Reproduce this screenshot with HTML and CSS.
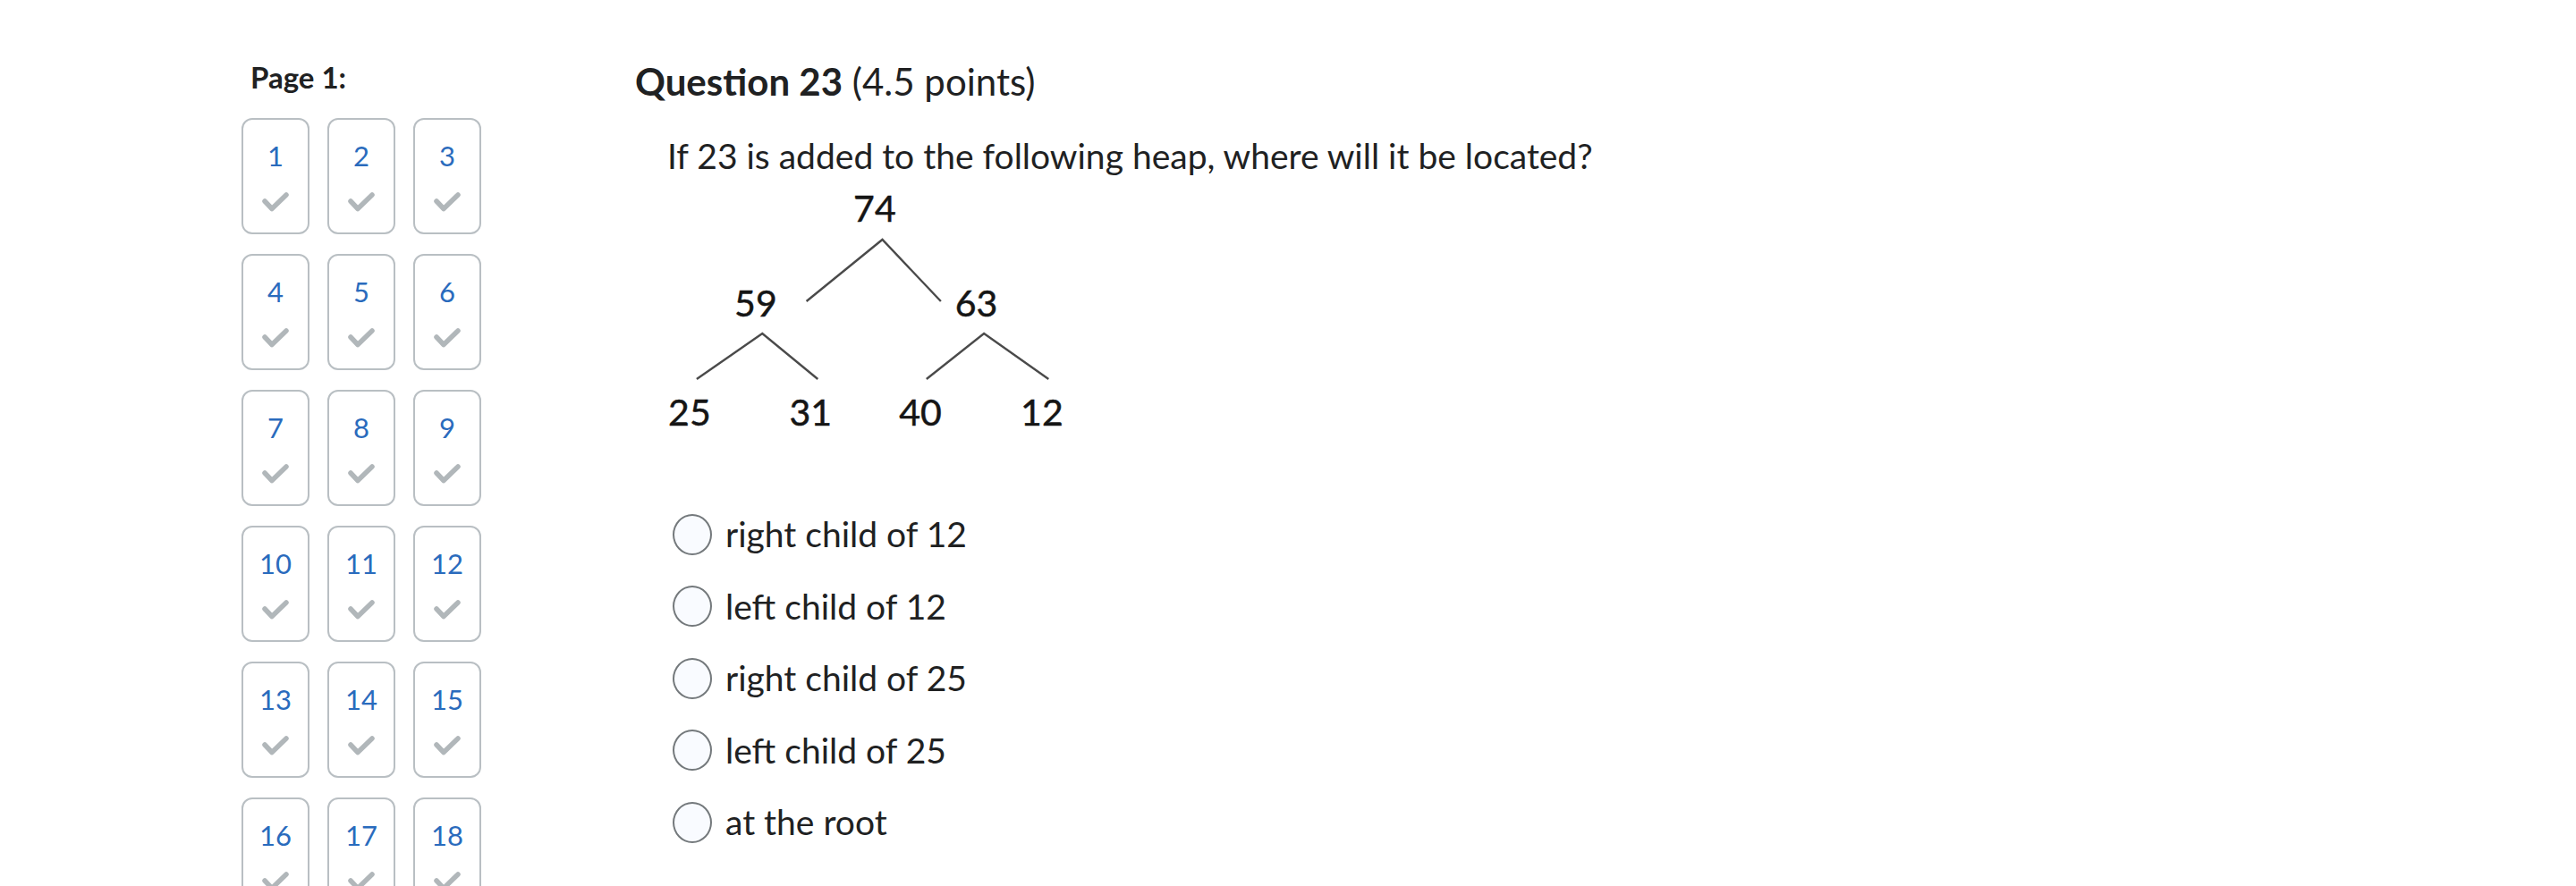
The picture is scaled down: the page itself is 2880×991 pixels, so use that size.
FILE: index.html
```html
<!DOCTYPE html>
<html lang="en">
<head>
<meta charset="utf-8">
<title>Question 23</title>
<link rel="stylesheet" href="styles.css">
</head>
<body>
<div class="page">
  <aside class="nav">
    <h2 class="nav-title">Page 1:</h2>
    <div class="tiles">
      <a class="tile"><span class="num">1</span><svg class="chk" viewBox="0 0 30 22"><path d="M3 10 L11 18.5 L27 3"/></svg></a>
      <a class="tile"><span class="num">2</span><svg class="chk" viewBox="0 0 30 22"><path d="M3 10 L11 18.5 L27 3"/></svg></a>
      <a class="tile"><span class="num">3</span><svg class="chk" viewBox="0 0 30 22"><path d="M3 10 L11 18.5 L27 3"/></svg></a>
      <a class="tile"><span class="num">4</span><svg class="chk" viewBox="0 0 30 22"><path d="M3 10 L11 18.5 L27 3"/></svg></a>
      <a class="tile"><span class="num">5</span><svg class="chk" viewBox="0 0 30 22"><path d="M3 10 L11 18.5 L27 3"/></svg></a>
      <a class="tile"><span class="num">6</span><svg class="chk" viewBox="0 0 30 22"><path d="M3 10 L11 18.5 L27 3"/></svg></a>
      <a class="tile"><span class="num">7</span><svg class="chk" viewBox="0 0 30 22"><path d="M3 10 L11 18.5 L27 3"/></svg></a>
      <a class="tile"><span class="num">8</span><svg class="chk" viewBox="0 0 30 22"><path d="M3 10 L11 18.5 L27 3"/></svg></a>
      <a class="tile"><span class="num">9</span><svg class="chk" viewBox="0 0 30 22"><path d="M3 10 L11 18.5 L27 3"/></svg></a>
      <a class="tile"><span class="num">10</span><svg class="chk" viewBox="0 0 30 22"><path d="M3 10 L11 18.5 L27 3"/></svg></a>
      <a class="tile"><span class="num">11</span><svg class="chk" viewBox="0 0 30 22"><path d="M3 10 L11 18.5 L27 3"/></svg></a>
      <a class="tile"><span class="num">12</span><svg class="chk" viewBox="0 0 30 22"><path d="M3 10 L11 18.5 L27 3"/></svg></a>
      <a class="tile"><span class="num">13</span><svg class="chk" viewBox="0 0 30 22"><path d="M3 10 L11 18.5 L27 3"/></svg></a>
      <a class="tile"><span class="num">14</span><svg class="chk" viewBox="0 0 30 22"><path d="M3 10 L11 18.5 L27 3"/></svg></a>
      <a class="tile"><span class="num">15</span><svg class="chk" viewBox="0 0 30 22"><path d="M3 10 L11 18.5 L27 3"/></svg></a>
      <a class="tile"><span class="num">16</span><svg class="chk" viewBox="0 0 30 22"><path d="M3 10 L11 18.5 L27 3"/></svg></a>
      <a class="tile"><span class="num">17</span><svg class="chk" viewBox="0 0 30 22"><path d="M3 10 L11 18.5 L27 3"/></svg></a>
      <a class="tile"><span class="num">18</span><svg class="chk" viewBox="0 0 30 22"><path d="M3 10 L11 18.5 L27 3"/></svg></a>
    </div>
  </aside>
  <main class="question">
    <h1 class="q-title"><strong>Question 23</strong> (4.5 points)</h1>
    <p class="q-text">If 23 is added to the following heap, where will it be located?</p>
    <svg class="heap" width="470" height="270" viewBox="0 0 470 270">
      <g class="edges">
        <path d="M161.6 122 L246.5 53 L311.9 122"/>
        <path d="M38.9 209 L112.3 158 L174.3 209"/>
        <path d="M295.8 209 L360.1 158 L432.3 209"/>
      </g>
      <g class="keys">
        <text x="237.9" y="33">74</text>
        <text x="104.9" y="139">59</text>
        <text x="351.5" y="139">63</text>
        <text x="30.9" y="261">25</text>
        <text x="166.2" y="261">31</text>
        <text x="289" y="261">40</text>
        <text x="424.9" y="261">12</text>
      </g>
    </svg>
    <ul class="options">
      <li class="option"><span class="radio"></span><span class="label">right child of 12</span></li>
      <li class="option"><span class="radio"></span><span class="label">left child of 12</span></li>
      <li class="option"><span class="radio"></span><span class="label">right child of 25</span></li>
      <li class="option"><span class="radio"></span><span class="label">left child of 25</span></li>
      <li class="option"><span class="radio"></span><span class="label">at the root</span></li>
    </ul>
  </main>
</div>
</body>
</html>
```

FILE: styles.css
```css
* { box-sizing: border-box; }
html, body { margin: 0; padding: 0; background: #ffffff; }
body {
  font-family: Lato, "Open Sans", sans-serif;
  color: #202122;
  overflow: hidden;
  height: 991px;
}
.page {
  display: flex;
  padding: 66px 0 0 270px;
}
.nav { width: 440px; flex: none; }
.nav-title {
  margin: 0;
  font-size: 33px;
  line-height: 40px;
  font-weight: 700;
  color: #202122;
  padding-left: 10px;
}
.tiles {
  margin-top: 26px;
  display: grid;
  grid-template-columns: repeat(3, 76px);
  column-gap: 20px;
  row-gap: 22px;
}
.tile {
  height: 130px;
  border: 2px solid #b9bfc3;
  border-radius: 12px;
  display: flex;
  flex-direction: column;
  align-items: center;
  padding-top: 22px;
}
.num {
  font-size: 31px;
  line-height: 36px;
  color: #2a6bbd;
}
.chk {
  margin-top: 23px;
  width: 30px;
  height: 22px;
  fill: none;
  stroke: #b1b7ba;
  stroke-width: 5.5;
  stroke-linecap: round;
  stroke-linejoin: round;
}
.question { flex: 1; }
.q-title {
  margin: 0;
  font-size: 42px;
  line-height: 50px;
  font-weight: 400;
  color: #202122;
}
.q-title strong { font-weight: 700; }
.q-text {
  margin: 35px 0 0 36px;
  font-size: 39px;
  line-height: 47px;
  color: #202122;
}
.heap {
  display: block;
  margin: 17px 0 0 30px;
  overflow: visible;
}
.edges path {
  fill: none;
  stroke: #4a4a4a;
  stroke-width: 2.4;
}
.keys text {
  font-family: Lato, "Open Sans", sans-serif;
  font-size: 41px;
  fill: #151515;
  stroke: #151515;
  stroke-width: 0.5;
  text-anchor: middle;
}
.options {
  list-style: none;
  margin: 89px 0 0 42px;
  padding: 0;
  display: flex;
  flex-direction: column;
  gap: 33.5px;
}
.option {
  display: flex;
  align-items: center;
  height: 47px;
}
.radio {
  width: 44px;
  height: 46px;
  flex: none;
  border: 2px solid #74797c;
  border-radius: 50%;
  background: #f9fbff;
}
.label {
  margin-left: 15px;
  font-size: 39px;
  line-height: 47px;
  color: #202122;
}
```
